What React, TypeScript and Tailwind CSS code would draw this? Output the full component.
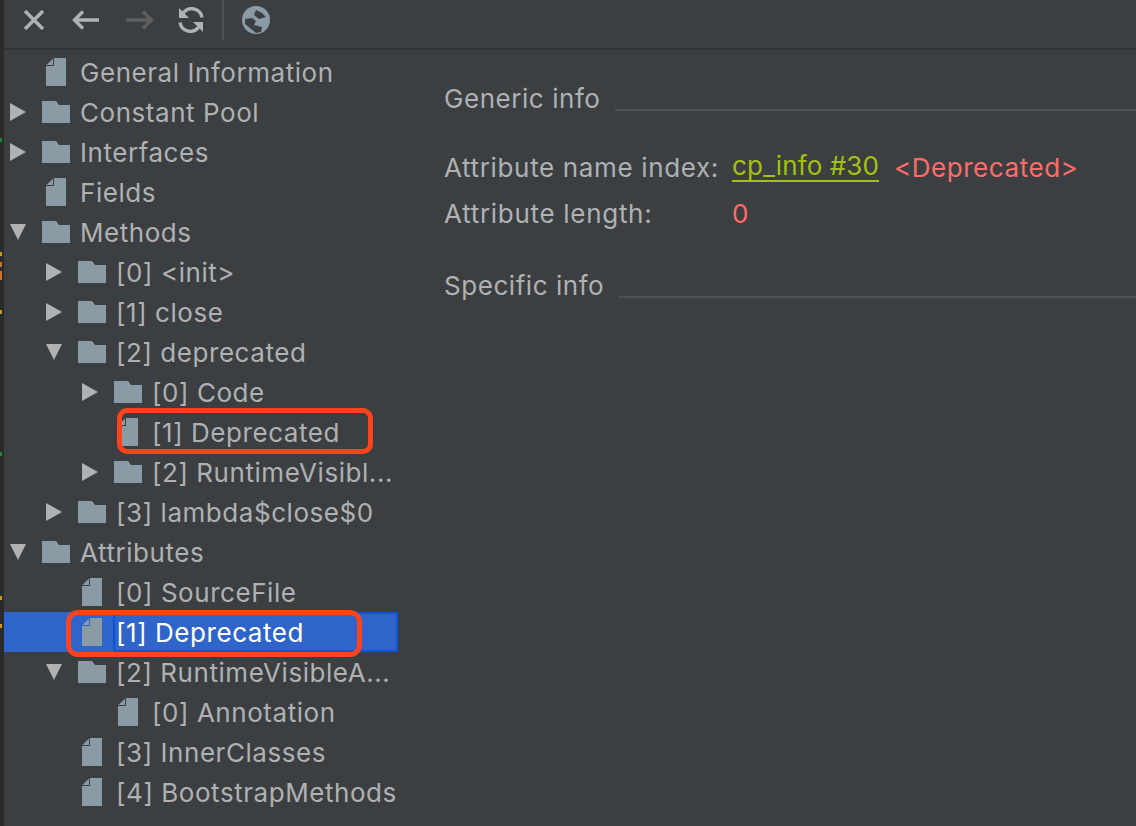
const fileColor = '#8a9ba6';

function FileIcon() {
  return (
    <svg width="20" height="28" viewBox="0 0 20 28" className="shrink-0">
      <path d="M8 0H20V28H0V8H8Z" fill={fileColor} />
      <path d="M0.5 7L7 0.5V7Z" fill={fileColor} />
    </svg>
  );
}

function FolderIcon() {
  return (
    <svg width="28" height="22" viewBox="0 0 28 22" className="shrink-0">
      <path d="M0 0H14L17 4H28V22H0Z" fill={fileColor} />
    </svg>
  );
}

function Arrow({ open }: { open?: boolean }) {
  return (
    <svg width="16" height="18" viewBox="0 0 16 18" className="shrink-0">
      {open ? <path d="M0 1H16L8 17Z" fill="#afb1b3" /> : <path d="M0 0L16 9L0 18Z" fill="#afb1b3" />}
    </svg>
  );
}

type Row = { label: string; depth: number; kind: 'file' | 'closed' | 'open'; selected?: boolean };

const rows: Row[] = [
  { label: 'General Information', depth: 0, kind: 'file' },
  { label: 'Constant Pool', depth: 0, kind: 'closed' },
  { label: 'Interfaces', depth: 0, kind: 'closed' },
  { label: 'Fields', depth: 0, kind: 'file' },
  { label: 'Methods', depth: 0, kind: 'open' },
  { label: '[0] <init>', depth: 1, kind: 'closed' },
  { label: '[1] close', depth: 1, kind: 'closed' },
  { label: '[2] deprecated', depth: 1, kind: 'open' },
  { label: '[0] Code', depth: 2, kind: 'closed' },
  { label: '[1] Deprecated', depth: 2, kind: 'file' },
  { label: '[2] RuntimeVisibl...', depth: 2, kind: 'closed' },
  { label: '[3] lambda$close$0', depth: 1, kind: 'closed' },
  { label: 'Attributes', depth: 0, kind: 'open' },
  { label: '[0] SourceFile', depth: 1, kind: 'file' },
  { label: '[1] Deprecated', depth: 1, kind: 'file', selected: true },
  { label: '[2] RuntimeVisibleA...', depth: 1, kind: 'open' },
  { label: '[0] Annotation', depth: 2, kind: 'file' },
  { label: '[3] InnerClasses', depth: 1, kind: 'file' },
  { label: '[4] BootstrapMethods', depth: 1, kind: 'file' },
];

const indent = ['pl-[6px]', 'pl-[42px]', 'pl-[78px]'];

function TreeRow({ row }: { row: Row }) {
  return (
    <div className={`flex h-10 w-[394px] items-center ${indent[row.depth]} ${row.selected ? 'bg-[#2f65ca] text-white' : 'text-[#afb1b3]'}`}>
      <div className="flex w-[32px] shrink-0 items-center">
        {row.kind === 'closed' && <Arrow />}
        {row.kind === 'open' && <Arrow open />}
      </div>
      <div className="flex w-[38px] shrink-0">
        {row.kind === 'file' ? <div className="ml-[4px] flex"><FileIcon /></div> : <FolderIcon />}
      </div>
      {row.selected ? (
        <div className="ml-[-3px] flex h-full flex-1 items-center whitespace-nowrap border-2 border-[#0f55d8] pl-[1px]">{row.label}</div>
      ) : (
        <div className="whitespace-nowrap">{row.label}</div>
      )}
    </div>
  );
}

function Section({ title }: { title: string }) {
  return (
    <div className="flex items-end gap-[15px] text-[#afb1b3]">
      <span className="leading-[32px]">{title}</span>
      <div className="mb-[4px] h-[2px] flex-1 bg-[#515151]" />
    </div>
  );
}

export default function App() {
  return (
    <div className="relative h-[826px] w-[1136px] overflow-hidden bg-[#3c3f41] text-[26px] tracking-[0.55px] [font-family:Inter,'Liberation_Sans',sans-serif]">
      {/* toolbar */}
      <div className="flex h-[50px] items-center border-b-2 border-[#323232] pb-[8px] pl-[24px]">
        <svg width="20" height="20" viewBox="0 0 20 20" fill="none" stroke="#afb1b3" strokeWidth="3.4" className="shrink-0">
          <path d="M1 1L19 19M19 1L1 19" />
        </svg>
        <svg width="28" height="20" viewBox="0 0 28 20" fill="none" stroke="#afb1b3" strokeWidth="3.4" className="ml-[28px] shrink-0">
          <path d="M27 10H3M11 1.5L2.5 10L11 18.5" />
        </svg>
        <svg width="28" height="20" viewBox="0 0 28 20" fill="none" stroke="#5c5e60" strokeWidth="3.4" className="ml-[26px] shrink-0">
          <path d="M0 10H24M17 1.5L25.5 10L17 18.5" />
        </svg>
        <svg width="26" height="26" viewBox="0 0 26 26" fill="none" stroke="#afb1b3" strokeWidth="3.4" className="ml-[24px] shrink-0">
          <path d="M24 10.5A10.5 10.5 0 0 0 6 5L3 8" />
          <path d="M1 1V11H11Z" strokeWidth="0" fill="#afb1b3" />
          <path d="M2 15.5A10.5 10.5 0 0 0 20 21L23 18" />
          <path d="M25 25V15H15Z" strokeWidth="0" fill="#afb1b3" />
        </svg>
        <div className="ml-[18px] h-[40px] w-[2px] bg-[#515151]" />
        <svg width="28" height="28" viewBox="0 0 28 28" className="ml-[18px] shrink-0">
          <circle cx="14" cy="14" r="14" fill="#8a9ba6" />
          <path d="M3 13L10 12L14 15L12 19L20 21L19 26L14 27L3 18Z" fill="#3c3f41" />
          <path d="M14 4L20 7L24 11L17 13L12 9Z" fill="#3c3f41" />
        </svg>
      </div>

      {/* body */}
      <div className="flex pl-[4px]">
        <div className="flex shrink-0 flex-col pt-[2px]">
          {rows.map((row, i) => (
            <TreeRow key={i} row={row} />
          ))}
        </div>

        <div className="min-w-0 flex-1 pl-[46px] pt-[33px] text-[#afb1b3]">
          <Section title="Generic info" />
          <div className="mt-[36px] flex h-[32px] items-center">
            <span className="w-[288px] shrink-0 tracking-[0.65px]">Attribute name index:</span>
            <span className="border-b-2 border-[#a5c10f] leading-[28px] tracking-[0.1px] text-[#a5c10f]">cp_info #30</span>
            <span className="ml-[15px] text-[#ff6b68]">&lt;Deprecated&gt;</span>
          </div>
          <div className="mt-[14px] flex h-[32px] items-center">
            <span className="w-[288px] shrink-0 tracking-[0.7px]">Attribute length:</span>
            <span className="text-[#ff6b68]">0</span>
          </div>
          <div className="mt-[41px]">
            <Section title="Specific info" />
          </div>
        </div>
      </div>

      {/* editor gutter strip with markers */}
      <div className="absolute left-0 top-0 h-full w-[4px] bg-[#2b2b2b]" />
      <div className="absolute left-0 top-[138px] h-[4px] w-[2px] bg-[#1f8a2c]" />
      <div className="absolute left-0 top-[252px] h-[4px] w-[2px] bg-[#c79a1c]" />
      <div className="absolute left-0 top-[262px] h-[5px] w-[2px] bg-[#c9742c]" />
      <div className="absolute left-0 top-[271px] h-[9px] w-[2px] bg-[#c9742c]" />
      <div className="absolute left-0 top-[310px] h-[4px] w-[2px] bg-[#c79a1c]" />
      <div className="absolute left-0 top-[452px] h-[4px] w-[2px] bg-[#1f8a2c]" />
      <div className="absolute left-0 top-[596px] h-[4px] w-[2px] bg-[#c79a1c]" />
      <div className="absolute left-0 top-[624px] h-[4px] w-[2px] bg-[#c79a1c]" />

      {/* red annotation boxes */}
      <div className="absolute left-[117px] top-[408px] h-[46px] w-[256px] rounded-[10px] border-[5px] border-[#fb431d]" />
      <div className="absolute left-[66px] top-[610px] h-[47px] w-[296px] rounded-[12px] border-[5px] border-[#fb431d]" />
    </div>
  );
}
